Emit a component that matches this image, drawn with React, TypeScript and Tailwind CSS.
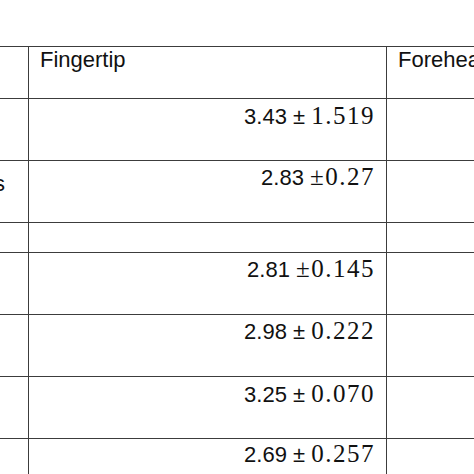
const sans = "font-['Liberation_Sans',Arial,sans-serif]";
const serif = "font-['Liberation_Serif','Times_New_Roman',serif]";

type Row = {
  label?: string;
  mean?: string;
  sd?: string;
  tight?: boolean;
  h: string;
  pt: string;
};

const rows: Row[] = [
  { mean: '3.43', sd: '1.519', h: 'h-[62px]', pt: 'pt-[5px]' },
  { label: 'Subjects', mean: '2.83', sd: '0.27', tight: true, h: 'h-[62px]', pt: 'pt-[4px]' },
  { h: 'h-[30px]', pt: 'pt-[4px]' },
  { mean: '2.81', sd: '0.145', tight: true, h: 'h-[62px]', pt: 'pt-[4px]' },
  { mean: '2.98', sd: '0.222', h: 'h-[62px]', pt: 'pt-[4px]' },
  { mean: '3.25', sd: '0.070', h: 'h-[62px]', pt: 'pt-[5px]' },
  { mean: '2.69', sd: '0.257', h: 'h-[62px]', pt: 'pt-[3px]' },
];

function Value({ row }: { row: Row }) {
  if (!row.mean) return null;
  return (
    <span className="whitespace-nowrap">
      <span className={`${sans} text-[22px]`}>{row.mean} </span>
      {row.tight ? (
        <span className={`${serif} text-[25px] tracking-[1.5px]`}>±{row.sd}</span>
      ) : (
        <>
          <span className={`${sans} text-[22px]`}>± </span>
          <span className={`${serif} text-[25px] tracking-[1.5px]`}>{row.sd}</span>
        </>
      )}
    </span>
  );
}

export default function App() {
  return (
    <div className="w-[474px] h-[474px] overflow-hidden bg-white text-[#111]">
      <div className="mt-[46px] ml-[-122px] w-[700px] border-t border-[#3c3c3c] grid grid-cols-[151px_358px_191px] leading-[24px]">
        {/* header */}
        <div className="h-[52px] border-r border-b border-[#3c3c3c]" />
        <div className={`h-[52px] border-r border-b border-[#3c3c3c] pl-[11px] pt-[1px] ${sans} text-[22px]`}>
          Fingertip
        </div>
        <div className={`h-[52px] border-b border-[#3c3c3c] pl-[11px] pt-[1px] ${sans} text-[22px]`}>
          Forehead
        </div>

        {rows.map((row, i) => (
          <div key={i} className="contents">
            <div
              className={`${row.h} border-r border-b border-[#3c3c3c] text-right pr-[23px] pt-[11px] ${sans} text-[22px]`}
            >
              {row.label}
            </div>
            <div className={`${row.h} border-r border-b border-[#3c3c3c] text-right pr-[11px] ${row.pt}`}>
              <Value row={row} />
            </div>
            <div className={`${row.h} border-b border-[#3c3c3c]`} />
          </div>
        ))}
      </div>
    </div>
  );
}
